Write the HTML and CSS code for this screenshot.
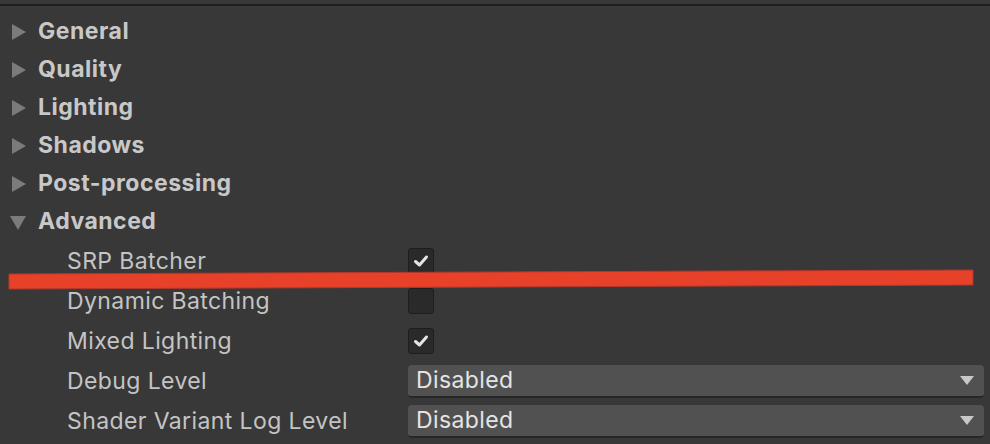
FILE: index.html
```html
<!DOCTYPE html>
<html>
<head>
<meta charset="utf-8">
<link rel="stylesheet" href="styles.css">
</head>
<body>
<div class="panel">
  <div class="topline"></div>
  <div class="sections">
    <div class="header"><span class="tri right"></span><span class="title">General</span></div>
    <div class="header"><span class="tri right"></span><span class="title">Quality</span></div>
    <div class="header"><span class="tri right"></span><span class="title">Lighting</span></div>
    <div class="header"><span class="tri right"></span><span class="title">Shadows</span></div>
    <div class="header"><span class="tri right"></span><span class="title">Post-processing</span></div>
    <div class="header"><span class="tri down"></span><span class="title">Advanced</span></div>
    <div class="props">
      <div class="row"><span class="label">SRP Batcher</span>
        <span class="check"><svg viewBox="0 0 26 26" width="26" height="26"><path d="M7.5 13.5 L11.5 17 L18.5 9" fill="none" stroke="#e4e4e4" stroke-width="3" stroke-linecap="round" stroke-linejoin="round"/></svg></span></div>
      <div class="row"><span class="label">Dynamic Batching</span><span class="check"></span></div>
      <div class="row"><span class="label">Mixed Lighting</span>
        <span class="check"><svg viewBox="0 0 26 26" width="26" height="26"><path d="M7.5 13.5 L11.5 17 L18.5 9" fill="none" stroke="#e4e4e4" stroke-width="3" stroke-linecap="round" stroke-linejoin="round"/></svg></span></div>
      <div class="row"><span class="label">Debug Level</span>
        <div class="dropdown"><span>Disabled</span><svg class="arrow" viewBox="0 0 14 9" width="14" height="9"><polygon points="0,0 14,0 7,9" fill="#c8c8c8"/></svg></div></div>
      <div class="row"><span class="label">Shader Variant Log Level</span>
        <div class="dropdown"><span>Disabled</span><svg class="arrow" viewBox="0 0 14 9" width="14" height="9"><polygon points="0,0 14,0 7,9" fill="#c8c8c8"/></svg></div></div>
    </div>
  </div>
  <svg class="annot" width="990" height="444" viewBox="0 0 990 444"><polygon points="9,274 973,270 973,285 9,289" fill="#e8412a" stroke="#b5362a" stroke-width="1"/></svg>
</div>
</body>
</html>
```
FILE: styles.css
```css
html, body {
  margin: 0;
  padding: 0;
  background: #383838;
}
.panel {
  position: relative;
  width: 990px;
  height: 444px;
  overflow: hidden;
  background: #383838;
  font-family: Inter, "Noto Sans", sans-serif;
}
.topline {
  margin-top: 4px;
  height: 2px;
  background: #1f1f1f;
}
.sections {
  padding-top: 6px;
}
.header {
  height: 38px;
  display: flex;
  align-items: center;
}
.tri {
  width: 0;
  height: 0;
  display: inline-block;
}
.tri.right {
  margin-left: 12px;
  border-top: 8px solid transparent;
  border-bottom: 8px solid transparent;
  border-left: 14px solid #7b7b7b;
  margin-right: 12px;
  margin-top: 1px;
}
.tri.down {
  margin-left: 10px;
  border-left: 8px solid transparent;
  border-right: 8px solid transparent;
  border-top: 14px solid #7b7b7b;
  margin-right: 12px;
  margin-top: 3px;
}
.title {
  font-size: 23px;
  font-weight: 700;
  color: #c8c8c8;
  letter-spacing: 0.5px;
}
.props {
  padding-top: 1px;
}
.row {
  height: 40px;
  display: flex;
  align-items: center;
  padding-left: 67px;
}
.label {
  width: 341px;
  flex: none;
  font-size: 23px;
  color: #c4c4c4;
  letter-spacing: 0.4px;
}
.check {
  width: 24px;
  height: 24px;
  background: #2a2a2a;
  border: 1px solid #1e1e1e;
  border-radius: 3px;
  position: relative;
  display: inline-block;
}
.check svg {
  position: absolute;
  left: -1px;
  top: -1px;
}
.dropdown {
  width: 576px;
  height: 33px;
  box-sizing: border-box;
  background: #515151;
  border-radius: 4px;
  border-bottom: 2px solid #262626;
  display: flex;
  align-items: center;
  justify-content: space-between;
  padding: 0 10px 0 8px;
  margin-top: 0;
  font-size: 23px;
  letter-spacing: 0.4px;
  color: #e4e4e4;
}
.arrow {
  display: block;
}
.annot {
  position: absolute;
  left: 0;
  top: 0;
  pointer-events: none;
}
```
